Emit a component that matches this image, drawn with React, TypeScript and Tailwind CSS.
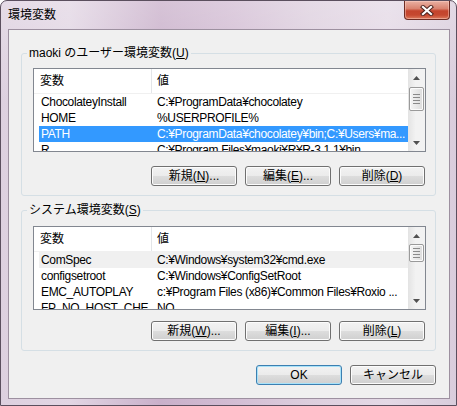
import type { ReactNode } from "react";

const font = "font-['Liberation_Sans','Noto_Sans_CJK_JP',sans-serif]";

type Row = { name: string; value: string; state?: "active" | "inactive" };

const userVars: Row[] = [
  { name: "ChocolateyInstall", value: "C:¥ProgramData¥chocolatey" },
  { name: "HOME", value: "%USERPROFILE%" },
  { name: "PATH", value: "C:¥ProgramData¥chocolatey¥bin;C:¥Users¥ma...", state: "active" },
  { name: "R", value: "C:¥Program Files¥maoki¥R¥R-3.1.1¥bin" },
];

const systemVars: Row[] = [
  { name: "ComSpec", value: "C:¥Windows¥system32¥cmd.exe", state: "inactive" },
  { name: "configsetroot", value: "C:¥Windows¥ConfigSetRoot" },
  { name: "EMC_AUTOPLAY", value: "c:¥Program Files (x86)¥Common Files¥Roxio ..." },
  { name: "FP_NO_HOST_CHE", value: "NO" },
];

function Key({ children }: { children: ReactNode }) {
  return <span className="underline underline-offset-[1px]">{children}</span>;
}

function Btn({ children, primary = false }: { children: ReactNode; primary?: boolean }) {
  return (
    <button
      className={
        "flex h-[20px] w-[86px] shrink-0 items-center justify-center rounded-[3px] border text-[12px] leading-[16px] text-black " +
        "bg-[linear-gradient(180deg,#f2f2f2_0%,#ebebeb_50%,#dddddd_51%,#cfcfcf_100%)] " +
        (primary
          ? "border-[#3c7fb1] shadow-[inset_0_0_0_1px_#a8e2f9]"
          : "border-[#707070] shadow-[inset_0_0_0_1px_#fcfcfc]")
      }
    >
      {children}
    </button>
  );
}

function Arrow({ dir }: { dir: "up" | "down" }) {
  return (
    <div className="flex h-[17px] shrink-0 items-center justify-center">
      <svg width="7" height="4" viewBox="0 0 7 4">
        <path d={dir === "up" ? "M3.5 0 L7 4 L0 4 Z" : "M0 0 L7 0 L3.5 4 Z"} fill="#505050" />
      </svg>
    </div>
  );
}

function ScrollBar({ thumb }: { thumb: string }) {
  return (
    <div className="flex w-[17px] shrink-0 flex-col bg-[linear-gradient(90deg,#e3e3e3,#f2f2f2_45%,#f2f2f2)]">
      <Arrow dir="up" />
      <div className="flex-1">
        <div
          className={
            "mx-[1px] flex flex-col items-center justify-center gap-[2px] rounded-[2px] border border-[#9a9a9a] bg-[linear-gradient(90deg,#f5f5f5,#e6e6e6_60%,#dcdcdc)] shadow-[inset_0_0_0_1px_#fbfbfb] " +
            thumb
          }
        >
          <div className="h-px w-[7px] bg-[#8a8a8a]" />
          <div className="h-px w-[7px] bg-[#8a8a8a]" />
          <div className="h-px w-[7px] bg-[#8a8a8a]" />
          <div className="h-px w-[7px] bg-[#8a8a8a]" />
        </div>
      </div>
      <Arrow dir="down" />
    </div>
  );
}

function ListView({ rows, thumb }: { rows: Row[]; thumb: string }) {
  return (
    <div className="flex h-[84px] min-w-0 border border-[#828790] bg-white text-[12px] leading-[16px]">
      <div className="flex min-w-0 flex-1 flex-col overflow-hidden">
        <div className="flex h-[25px] shrink-0 border-b border-[#f0f0f0]">
          <div className="flex w-[117px] items-center pl-[6px]">変数</div>
          <div className="w-px bg-[#e3e5e8]" />
          <div className="flex items-center pl-[5px]">値</div>
        </div>
        {rows.map((r) => (
          <div
            key={r.name}
            className={
              "ml-[5px] flex h-[16px] shrink-0 items-center whitespace-nowrap tracking-[-0.35px] " +
              (r.state === "active"
                ? "bg-[#3399ff] text-white"
                : r.state === "inactive"
                  ? "bg-[#f0f0f0] text-black"
                  : "text-black")
            }
          >
            <div className="w-[112px] shrink-0 overflow-hidden pl-[2px]">{r.name}</div>
            <div className="min-w-0 flex-1 overflow-hidden pl-[6px]">{r.value}</div>
          </div>
        ))}
      </div>
      <ScrollBar thumb={thumb} />
    </div>
  );
}

function Group({
  label,
  children,
  className = "",
}: {
  label: ReactNode;
  children: ReactNode;
  className?: string;
}) {
  return (
    <fieldset
      className={
        "min-w-0 rounded-[3px] border border-[#d5dfe5] pb-[9px] pl-[11px] pr-[9px] " + className
      }
    >
      <legend className="ml-[-6px] px-[2px] text-[12px] leading-[14px]">{label}</legend>
      {children}
    </fieldset>
  );
}

export default function App() {
  return (
    <div className={"h-[406px] w-[457px] bg-white text-black " + font}>
      <div className="flex h-full flex-col rounded-t-[7px] border border-[#5b4f5e] bg-[linear-gradient(180deg,rgba(255,255,255,0.25),rgba(255,255,255,0)_25%),linear-gradient(90deg,#ddd0df_0%,#e2d6e4_15%,#c9b0ca_35%,#d2bcd3_50%,#ddcfde_68%,#e4d9e6_85%,#d9cddc_100%)] pb-[6px] pl-[7px] pr-[6px]">
        <div className="flex h-[28px] shrink-0 items-start justify-between">
          <span className="mt-[6px] text-[12px] leading-[16px]">環境変数</span>
          <div className="flex h-[19px] w-[46px] items-center justify-center rounded-b-[4px] border border-t-0 border-[#6d2c24] bg-[linear-gradient(180deg,#eab1a3_0%,#d98370_42%,#c4442d_55%,#c64830_78%,#dc7b5e_100%)] shadow-[inset_0_0_0_1px_rgba(255,215,205,0.45)]">
            <svg width="14" height="11" viewBox="0 0 14 11">
              <path d="M3 2 L11 9 M11 2 L3 9" stroke="#4f2520" strokeWidth="4.2" strokeLinecap="square" />
              <path d="M3 2 L11 9 M11 2 L3 9" stroke="#ffffff" strokeWidth="2.2" strokeLinecap="square" />
            </svg>
          </div>
        </div>

        <div className="flex min-w-0 flex-1 flex-col border border-[#9d90a0] bg-[#f0f0f0] pl-[12px] pr-[13px]">
          <Group
            className="mt-[16px]"
            label={
              <>
                maoki のユーザー環境変数(<Key>U</Key>)
              </>
            }
          >
            <div className="mt-[8px]">
              <ListView rows={userVars} thumb="mt-[1px] h-[24px]" />
            </div>
            <div className="mt-[14px] flex justify-end gap-[8px] pr-[1px]">
              <Btn>
                新規(<Key>N</Key>)...
              </Btn>
              <Btn>
                編集(<Key>E</Key>)...
              </Btn>
              <Btn>
                削除(<Key>D</Key>)
              </Btn>
            </div>
          </Group>

          <Group
            className="mt-[7px]"
            label={
              <>
                システム環境変数(<Key>S</Key>)
              </>
            }
          >
            <div className="mt-[9px]">
              <ListView rows={systemVars} thumb="h-[18px]" />
            </div>
            <div className="mt-[11px] flex justify-end gap-[8px] pr-[1px]">
              <Btn>
                新規(<Key>W</Key>)...
              </Btn>
              <Btn>
                編集(<Key>I</Key>)...
              </Btn>
              <Btn>
                削除(<Key>L</Key>)
              </Btn>
            </div>
          </Group>

          <div className="mt-[14px] flex justify-end gap-[8px]">
            <Btn primary>OK</Btn>
            <Btn>キャンセル</Btn>
          </div>
        </div>
      </div>
    </div>
  );
}
